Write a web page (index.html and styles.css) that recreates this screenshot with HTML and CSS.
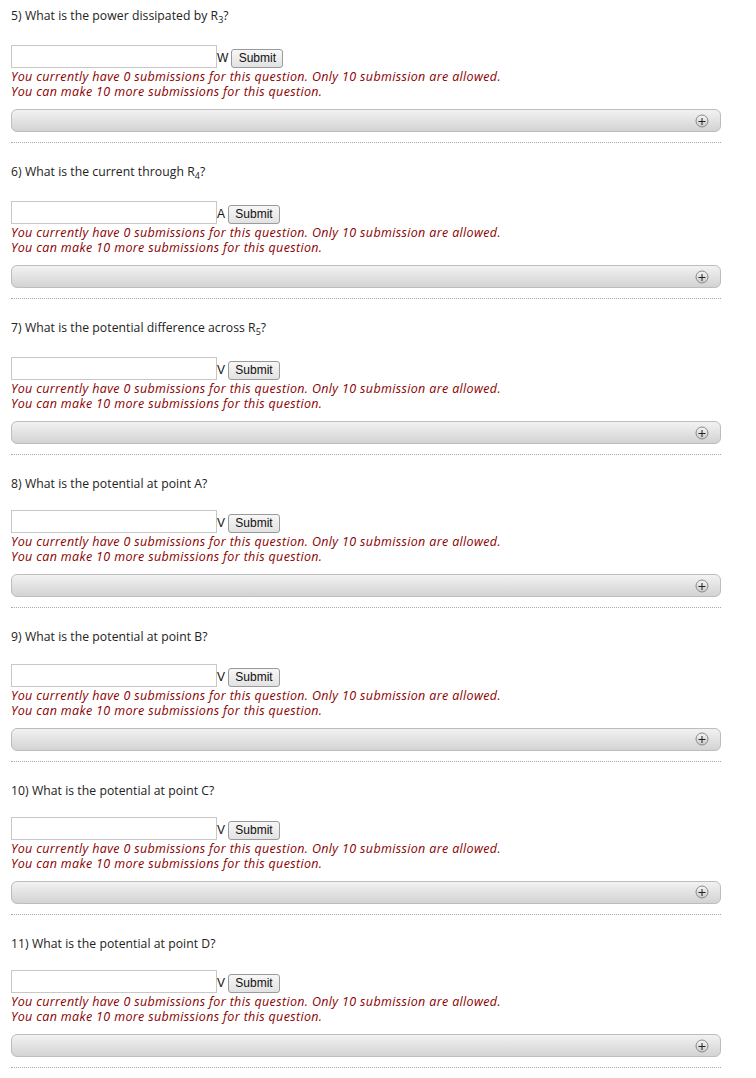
FILE: index.html
```html
<!DOCTYPE html>
<html>
<head>
<meta charset="utf-8">
<link rel="stylesheet" href="styles.css">
</head>
<body>
<div class="page">

  <div class="question">
    <p class="q-text with-sub">5) What is the power dissipated by R<sub>3</sub>?</p>
    <div class="answer-row"><input class="answer" type="text"><span class="unit">W</span><button class="submit">Submit</button></div>
    <div class="notice">You currently have 0 submissions for this question. Only 10 submission are allowed.<br>You can make 10 more submissions for this question.</div>
    <div class="bar"><svg class="plus" width="14" height="14" viewBox="0 0 14 14"><defs><linearGradient id="g1" x1="0" y1="0" x2="0" y2="1"><stop offset="0" stop-color="#f6f6f6"/><stop offset="1" stop-color="#c9c9c9"/></linearGradient></defs><circle cx="7" cy="7" r="6" fill="url(#g1)" stroke="#8a8a8a" stroke-width="1"/><path d="M3.5 7.5h7M7 4v7" stroke="#222" stroke-width="1" fill="none"/></svg></div>
    <div class="sep"></div>
  </div>

  <div class="question">
    <p class="q-text with-sub">6) What is the current through R<sub>4</sub>?</p>
    <div class="answer-row"><input class="answer" type="text"><span class="unit">A</span><button class="submit">Submit</button></div>
    <div class="notice">You currently have 0 submissions for this question. Only 10 submission are allowed.<br>You can make 10 more submissions for this question.</div>
    <div class="bar"><svg class="plus" width="14" height="14" viewBox="0 0 14 14"><circle cx="7" cy="7" r="6" fill="url(#g1)" stroke="#8a8a8a" stroke-width="1"/><path d="M3.5 7.5h7M7 4v7" stroke="#222" stroke-width="1" fill="none"/></svg></div>
    <div class="sep"></div>
  </div>

  <div class="question">
    <p class="q-text with-sub">7) What is the potential difference across R<sub>5</sub>?</p>
    <div class="answer-row"><input class="answer" type="text"><span class="unit">V</span><button class="submit">Submit</button></div>
    <div class="notice">You currently have 0 submissions for this question. Only 10 submission are allowed.<br>You can make 10 more submissions for this question.</div>
    <div class="bar"><svg class="plus" width="14" height="14" viewBox="0 0 14 14"><circle cx="7" cy="7" r="6" fill="url(#g1)" stroke="#8a8a8a" stroke-width="1"/><path d="M3.5 7.5h7M7 4v7" stroke="#222" stroke-width="1" fill="none"/></svg></div>
    <div class="sep"></div>
  </div>

  <div class="question">
    <p class="q-text">8) What is the potential at point A?</p>
    <div class="answer-row"><input class="answer" type="text"><span class="unit">V</span><button class="submit">Submit</button></div>
    <div class="notice">You currently have 0 submissions for this question. Only 10 submission are allowed.<br>You can make 10 more submissions for this question.</div>
    <div class="bar"><svg class="plus" width="14" height="14" viewBox="0 0 14 14"><circle cx="7" cy="7" r="6" fill="url(#g1)" stroke="#8a8a8a" stroke-width="1"/><path d="M3.5 7.5h7M7 4v7" stroke="#222" stroke-width="1" fill="none"/></svg></div>
    <div class="sep"></div>
  </div>

  <div class="question">
    <p class="q-text">9) What is the potential at point B?</p>
    <div class="answer-row"><input class="answer" type="text"><span class="unit">V</span><button class="submit">Submit</button></div>
    <div class="notice">You currently have 0 submissions for this question. Only 10 submission are allowed.<br>You can make 10 more submissions for this question.</div>
    <div class="bar"><svg class="plus" width="14" height="14" viewBox="0 0 14 14"><circle cx="7" cy="7" r="6" fill="url(#g1)" stroke="#8a8a8a" stroke-width="1"/><path d="M3.5 7.5h7M7 4v7" stroke="#222" stroke-width="1" fill="none"/></svg></div>
    <div class="sep"></div>
  </div>

  <div class="question">
    <p class="q-text">10) What is the potential at point C?</p>
    <div class="answer-row"><input class="answer" type="text"><span class="unit">V</span><button class="submit">Submit</button></div>
    <div class="notice">You currently have 0 submissions for this question. Only 10 submission are allowed.<br>You can make 10 more submissions for this question.</div>
    <div class="bar"><svg class="plus" width="14" height="14" viewBox="0 0 14 14"><circle cx="7" cy="7" r="6" fill="url(#g1)" stroke="#8a8a8a" stroke-width="1"/><path d="M3.5 7.5h7M7 4v7" stroke="#222" stroke-width="1" fill="none"/></svg></div>
    <div class="sep"></div>
  </div>

  <div class="question">
    <p class="q-text">11) What is the potential at point D?</p>
    <div class="answer-row"><input class="answer" type="text"><span class="unit">V</span><button class="submit">Submit</button></div>
    <div class="notice">You currently have 0 submissions for this question. Only 10 submission are allowed.<br>You can make 10 more submissions for this question.</div>
    <div class="bar"><svg class="plus" width="14" height="14" viewBox="0 0 14 14"><circle cx="7" cy="7" r="6" fill="url(#g1)" stroke="#8a8a8a" stroke-width="1"/><path d="M3.5 7.5h7M7 4v7" stroke="#222" stroke-width="1" fill="none"/></svg></div>
    <div class="sep"></div>
  </div>

</div>
</body>
</html>
```

FILE: styles.css
```css
html, body {
  margin: 0;
  padding: 0;
  background: #ffffff;
}

.page {
  width: 710px;
  margin-left: 11px;
  padding-top: 6px;
  font-family: "Open Sans", "Noto Sans", sans-serif;
  color: #222222;
}

.question + .question {
  padding-top: 19px;
}

.q-text {
  box-sizing: border-box;
  margin: 0;
  padding-top: 1px;
  font-size: 12.2px;
  letter-spacing: 0.05px;
  line-height: 17px;
  height: 18.333px;
}

.q-text.with-sub {
  height: 21px;
}

.q-text sub {
  font-size: 9px;
  line-height: 0;
  vertical-align: -3px;
}

.answer-row {
  display: flex;
  align-items: flex-start;
  margin-top: 18px;
  height: 23px;
}

.answer {
  box-sizing: border-box;
  width: 206px;
  height: 23px;
  margin: 0;
  padding: 2px 4px;
  border: 1px solid #c8c8c8;
  border-radius: 0;
  background: #ffffff;
  font-family: "Liberation Sans", Arial, sans-serif;
  font-size: 12px;
  outline: none;
}

.unit {
  font-family: "Liberation Sans", Arial, sans-serif;
  font-size: 12px;
  line-height: 19px;
  margin-top: 4px;
  color: #111111;
}

.submit {
  box-sizing: border-box;
  height: 19px;
  width: 52px;
  margin: 4px 0 0 3px;
  padding: 0 6px;
  border: 1px solid #9a9a9a;
  border-radius: 3px;
  background: linear-gradient(#f7f7f7, #e2e2e2);
  font-family: "Liberation Sans", Arial, sans-serif;
  font-size: 12px;
  line-height: 17px;
  color: #111111;
}

.notice {
  box-sizing: border-box;
  padding-top: 1px;
  font-size: 12.5px;
  letter-spacing: 0.35px;
  line-height: 15px;
  font-style: italic;
  color: #8b0000;
  height: 30px;
}

.bar {
  box-sizing: border-box;
  display: flex;
  align-items: center;
  justify-content: flex-end;
  height: 23px;
  margin-top: 11px;
  padding-right: 11px;
  border: 1px solid #bdbdbd;
  border-radius: 6px;
  background: linear-gradient(#f2f2f2, #d3d3d3);
}

.plus {
  display: block;
}

.sep {
  margin-top: 10px;
  border-top: 1px dotted #a8a8a8;
}
```
